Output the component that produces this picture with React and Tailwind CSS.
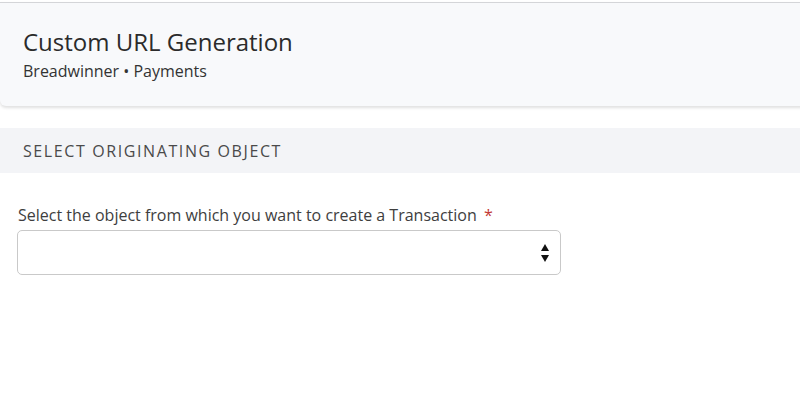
export default function App() {
  return (
    <div className="w-[800px] h-[402px] bg-white overflow-hidden" style={{ fontFamily: '"Open Sans", "Noto Sans", sans-serif' }}>
      <div className="pt-[2px]">
        <div className="bg-[#f8f9fb] border-t border-[#d4d5d8] rounded-bl-[6px] shadow-[0_2px_3px_rgba(0,0,0,0.12)] h-[104px] pl-[23px] pt-[24px] mr-[-10px]">
          <h1 className="text-[24px] leading-[30px] text-[#2b2b2b]">Custom URL Generation</h1>
          <p className="text-[16px] leading-[22px] text-[#333] mt-[3px]">Breadwinner • Payments</p>
        </div>
      </div>
      <div className="mt-[22px] h-[45px] bg-[#f3f4f7] flex items-center pl-[23px]">
        <span className="text-[16px] tracking-[1.6px] text-[#4a4a4a] uppercase">Select Originating Object</span>
      </div>
      <div className="px-[17px] pt-[31px]">
        <label className="block text-[16px] leading-[22px] text-[#3e3e3e] pl-[1px]">
          Select the object from which you want to create a Transaction <span className="text-[#c23934] ml-[3px]">*</span>
        </label>
        <div className="mt-[4px] w-[544px] h-[45px] border border-[#c9c9c9] rounded-[5px] bg-white flex items-center justify-end pr-[10px]">
          <svg width="10" height="26" viewBox="0 0 10 26">
            <path d="M5 4 L9 11 L1 11 Z" fill="#111" />
            <path d="M1 15 L9 15 L5 22 Z" fill="#111" />
          </svg>
        </div>
      </div>
    </div>
  )
}
